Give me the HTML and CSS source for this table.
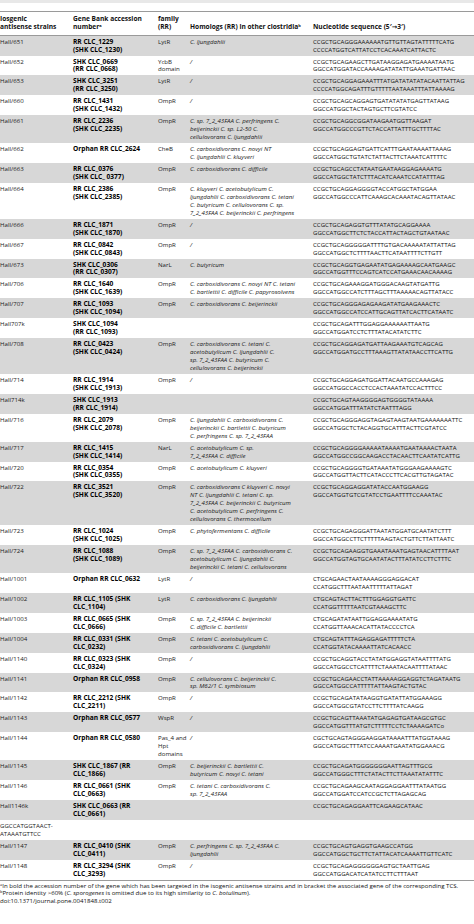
FILE: index.html
```html
<!DOCTYPE html>
<html>
<head>
<meta charset="utf-8">
<link rel="stylesheet" href="styles.css">
</head>
<body>
<div class="topband"></div>
<table class="tcs">
<colgroup><col class="w1"><col class="w2"><col class="w3"><col class="w4"><col class="w5"></colgroup>
<thead>
<tr><th>Iosgenic<br>antisense strains</th><th>Gene Bank accession<br>number<sup>a</sup></th><th>family<br>(RR)</th><th>Homologs (RR) in other clostridia<sup>b</sup></th><th>Nucleotide sequence (5′→3′)</th></tr>
</thead>
<tbody>
<tr><td class="c1">Hall/651</td><td class="c2">RR CLC_1229<br>(SHK CLC_1230)</td><td class="c3">LytR</td><td class="c4">C. ljungdahlii</td><td class="c5">CCGCTGCAGGGAAAAAATGTTGTTAGTATTTTTCATG<br>CCCCATGGTCATTATCCTCACAAATCATTACTC</td></tr>
<tr><td class="c1">Hall/652</td><td class="c2">SHK CLC_0669<br>(RR CLC_0668)</td><td class="c3">YcbB<br>domain</td><td class="c4">/</td><td class="c5">CCGCTGCAGAAGCTTGATAAGGAGATGAAAATAATG<br>GGCCATGGATACCAAAAGATATATTGAAATGATTAAC</td></tr>
<tr><td class="c1">Hall/653</td><td class="c2">SHK CLC_3251<br>(RR CLC_3250)</td><td class="c3">LytR</td><td class="c4">/</td><td class="c5">CCGCTGCAGGAGAAATTTATGATATATATACAATTATTAG<br>CCCCATGGCAGATTTGTTTTTAATAAATTTATTAAAAG</td></tr>
<tr><td class="c1">Hall/660</td><td class="c2">RR CLC_1431<br>(SHK CLC_1432)</td><td class="c3">OmpR</td><td class="c4">/</td><td class="c5">CCGCTGCAGCAGGAGTGATATATATGAGTTATAAG<br>GGCCATGGCTACTAGTGCTTCGTATCC</td></tr>
<tr><td class="c1">Hall/661</td><td class="c2">RR CLC_2236<br>(SHK CLC_2235)</td><td class="c3">OmpR</td><td class="c4">C. sp. 7_2_43FAA C. perfringens C.<br>beijerinckii C. sp. L2-50 C.<br>cellulovorans C. ljungdahlii</td><td class="c5">CCGCTGCAGGCGGATAAGAATGGTTAAGAT<br>GGCCATGGCCCGTTCTACCATTATTTGCTTTTAC</td></tr>
<tr><td class="c1">Hall/662</td><td class="c2">Orphan RR CLC_2624</td><td class="c3">CheB</td><td class="c4">C. carboxidivorans C. novyi NT<br>C. ljungdahlii C. kluyveri</td><td class="c5">CCGCTGCAGGAGTGATTCATTTGAATAAAATTAAAG<br>GGCCATGGCTGTATCTATTACTTCTAAATCATTTTC</td></tr>
<tr><td class="c1">Hall/663</td><td class="c2">RR CLC_0376<br>(SHK CLC_ 0377)</td><td class="c3">OmpR</td><td class="c4">C. carboxidivorans C. difficile</td><td class="c5">CCGCTGCAGCCTATAATGAATAAGGAGAAAATG<br>GGCCATGGCTATCTTTACATCAAATCCATATTTAG</td></tr>
<tr><td class="c1">Hall/664</td><td class="c2">RR CLC_2386<br>(SHK CLC_2385)</td><td class="c3">OmpR</td><td class="c4">C. kluyveri C. acetobutylicum C.<br>ljungdahlii C. carboxidivorans C. tetani<br>C. butyricum C. cellulovorans C. sp.<br>7_2_43FAA C. beijerinckii C. perfringens</td><td class="c5">CCGCTGCAGGAGGGGTACCATGGCTATGGAA<br>GGCCATGGCCCATTCAAAGCACAAATACAGTTATAAC</td></tr>
<tr><td class="c1">Hall/666</td><td class="c2">RR CLC_1871<br>(SHK CLC_1870)</td><td class="c3">OmpR</td><td class="c4">/</td><td class="c5">CCGCTGCAGAGGTGTTTATATGCAGGAAAA<br>GGCCATGGCTTCTCTACCATTACTAGCTGTAATAAC</td></tr>
<tr><td class="c1">Hall/667</td><td class="c2">RR CLC_0842<br>(SHK CLC_0843)</td><td class="c3">OmpR</td><td class="c4">/</td><td class="c5">CCGCTGCAGGGGGATTTTGTGACAAAAATATTATTAG<br>GGCCATGGCTCTTTTAACTTCATAATTTTCTTGTT</td></tr>
<tr><td class="c1">Hall/673</td><td class="c2">SHK CLC_0306<br>(RR CLC_0307)</td><td class="c3">NarL</td><td class="c4">C. butyricum</td><td class="c5">CCGCTGCAGGTGAGAATATGAGAAAAGCAATGAAGC<br>GGCCATGGTTTCCAGTCATCCATGAAACAACAAAAG</td></tr>
<tr><td class="c1">Hall/706</td><td class="c2">RR CLC_1640<br>(SHK CLC_1639)</td><td class="c3">OmpR</td><td class="c4">C. carboxidivorans C. novyi NT C. tetani<br>C. bartlettii C. difficile C. papyrosolvens</td><td class="c5">CCGCTGCAGAAAGGATGGGACAAGTATGATTG<br>GGCCATGGCCATCTTTAGCTTTAAAAACAGTTATACC</td></tr>
<tr><td class="c1">Hall/707</td><td class="c2">RR CLC_1093<br>(SHK CLC_1094)</td><td class="c3">OmpR</td><td class="c4">C. carboxidivorans C. beijerinckii</td><td class="c5">CCGCTGCAGGGAGAGAAGATATGAAGAAACTC<br>GGCCATGGCCATCCATTGCAGTTATCACTTCATAATC</td></tr>
<tr><td class="c1">Hall707k</td><td class="c2">SHK CLC_1094<br>(RR CLC_1093)</td><td class="c3"></td><td class="c4"></td><td class="c5">CCGCTGCAGATTTGGAGGAAAAAATTAATG<br>GGCCATGGATCCTCTTTATACATATCTTC</td></tr>
<tr><td class="c1">Hall/708</td><td class="c2">RR CLC_0423<br>(SHK CLC_0424)</td><td class="c3">OmpR</td><td class="c4">C. carboxidivorans C. tetani C.<br>acetobutylicum C. ljungdahlii C.<br>sp. 7_2_43FAA C. butyricum C.<br>cellulovorans C. beijerinckii</td><td class="c5">CCGCTGCAGGAGATGATTAAGAAATGTCAGCAG<br>GGCCATGGATGCCTTTAAAGTTATATAACCTTCATTG</td></tr>
<tr><td class="c1">Hall/714</td><td class="c2">RR CLC_1914<br>(SHK CLC_1913)</td><td class="c3">OmpR</td><td class="c4">/</td><td class="c5">CCGCTGCAGGAGATGGATTACAATGCCAAAGAG<br>GGCCATGGCCACCTCCACTAAATATCCACTTTCC</td></tr>
<tr><td class="c1">Hall714k</td><td class="c2">SHK CLC_1913<br>(RR CLC_1914)</td><td class="c3"></td><td class="c4"></td><td class="c5">CCGCTGCAGTAAGGGGAGTGGGGTATAAAA<br>GGCCATGGATTTATATCTAATTTAGG</td></tr>
<tr><td class="c1">Hall/716</td><td class="c2">RR CLC_2079<br>(SHK CLC_2078)</td><td class="c3">OmpR</td><td class="c4">C. ljungdahlii C. carboxidivorans C.<br>beijerinckii C. bartlettii C. butyricum<br>C. perfringens C. sp. 7_2_43FAA</td><td class="c5">CCGCTGCAGGGAGGTAGAGTAAGTAATGAAAAAAATTC<br>GGCCATGGCTCTACAGGTGCATTTACTTCGTATCC</td></tr>
<tr><td class="c1">Hall/717</td><td class="c2">RR CLC_1415<br>(SHK CLC_1414)</td><td class="c3">NarL</td><td class="c4">C. acetobutylicum C. sp.<br>7_2_43FAA C. difficile</td><td class="c5">CCGCTGCAGGGGAAAAATAAAATGAATAAAACTAATA<br>GGCCATGGCCGGCAAGACCTACAACTTCAATATCATTG</td></tr>
<tr><td class="c1">Hall/720</td><td class="c2">RR CLC_0354<br>(SHK CLC_0355)</td><td class="c3">OmpR</td><td class="c4">C. acetobutylicum C. kluyveri</td><td class="c5">CCGCTGCAGGGGTGATAAATATGGGAAGAAAAGTC<br>GGCCATGGTTACTTCATACCCTTCACGTTGTAGATAC</td></tr>
<tr><td class="c1">Hall/722</td><td class="c2">RR CLC_3521<br>(SHK CLC_3520)</td><td class="c3">OmpR</td><td class="c4">C. carboxidivorans C kluyveri C. novyi<br>NT C. ljungdahlii C. tetani C. sp.<br>7_2_43FAA C. beijerinckii C. butyricum<br>C. acetobutylicum C. perfringens C.<br>cellulovorans C. thermocellum</td><td class="c5">CCGCTGCAGGAGGATATACCAATGGAAGG<br>GGCCATGGTGTCGTATCCTGAATTTTCCAAATAC</td></tr>
<tr><td class="c1">Hall/723</td><td class="c2">RR CLC_1024<br>(SHK CLC_1025)</td><td class="c3">OmpR</td><td class="c4">C. phytofermentans C. difficile</td><td class="c5">CCGCTGCAGAGGGATTAATATGGATGCAATATCTTT<br>GGCCATGGCCTTCTTTTTAAGTACTGTTCTTATTAATC</td></tr>
<tr><td class="c1">Hall/724</td><td class="c2">RR CLC_1088<br>(SHK CLC_1089)</td><td class="c3">OmpR</td><td class="c4">C. sp. 7_2_43FAA C. carboxidivorans C.<br>acetobutylicum C. ljungdahlii C.<br>beijerinckii C. tetani C. cellulovorans</td><td class="c5">CCGCTGCAGAAGGTGAAATAAATGAGTAACATTTTAAT<br>GGCCATGGTAGTGCAATATACTTTATATCCTTCTTTC</td></tr>
<tr><td class="c1">Hall/1001</td><td class="c2">Orphan RR CLC_0632</td><td class="c3">LytR</td><td class="c4">/</td><td class="c5">CTGCAGAACTAATAAAAGGGAGGACAT<br>CCATGGCTTTAATAATTTTTATTAGAT</td></tr>
<tr><td class="c1">Hall/1002</td><td class="c2">RR CLC_1105 (SHK<br>CLC_1104)</td><td class="c3">LytR</td><td class="c4">C. carboxidivorans C. ljungdahlii</td><td class="c5">CTGCAGTACTTACTTTGGAGGTGATTC<br>CCATGGTTTTTAATCGTAAAGCTTC</td></tr>
<tr><td class="c1">Hall/1003</td><td class="c2">RR CLC_0665 (SHK<br>CLC_0666)</td><td class="c3">OmpR</td><td class="c4">C. sp. 7_2_43FAA C. beijerinckii<br>C. difficile C. bartlettii</td><td class="c5">CTGCAGATATAATTGGAGGAAAATATG<br>CCATGGTTAAACACATTATACCCCTCA</td></tr>
<tr><td class="c1">Hall/1004</td><td class="c2">RR CLC_0331 (SHK<br>CLC_0232)</td><td class="c3">OmpR</td><td class="c4">C. tetani C. acetobutylicum C.<br>carboxidivorans C. ljungdahlii</td><td class="c5">CTGCAGTATTTAGAGGAGATTTTTCTA<br>CCATGGTATACAAAATTATCACAACC</td></tr>
<tr><td class="c1">Hall/1140</td><td class="c2">RR CLC_0323 (SHK<br>CLC_0324)</td><td class="c3">OmpR</td><td class="c4">/</td><td class="c5">CCGCTGCAGGTACCTATATGGAGGTATAATTTTATG<br>GGCCATGGCCTCATTTTCTAAATACAATTTTATAAC</td></tr>
<tr><td class="c1">Hall/1141</td><td class="c2">Orphan RR CLC_0958</td><td class="c3">OmpR</td><td class="c4">C. cellulovorans C. beijerinckii C.<br>sp. M62/1 C. symbiosum</td><td class="c5">CCGCTGCAGAACCTATTAAAAAGGAGGTCTAGATAATG<br>GGCCATGGCCATTTTTATTAAGTACTGTAC</td></tr>
<tr><td class="c1">Hall/1142</td><td class="c2">RR CLC_2212 (SHK<br>CLC_2211)</td><td class="c3">OmpR</td><td class="c4">/</td><td class="c5">CCGCTGCAGATATAAGGTGATATTATGGAAAGG<br>GGCCATGGCGTATCCTTCTTTTATCAAGG</td></tr>
<tr><td class="c1">Hall/1143</td><td class="c2">Orphan RR CLC_0577</td><td class="c3">WspR</td><td class="c4">/</td><td class="c5">CCGCTGCAGTTAAATATGAGAGTGATAAGCGTGC<br>GGCCATGGTTTATGTCTTTTTCCTCTAAAAGATCo</td></tr>
<tr><td class="c1">Hall/1144</td><td class="c2">Orphan RR CLC_0580</td><td class="c3">Pas_4 and<br>Hpt<br>domains</td><td class="c4">/</td><td class="c5">CGCTGCAGTAGGGAAGGATAAAATTTATGGTAAAG<br>GGCCATGGCTTTATCCAAAATGAATATGGAAACG</td></tr>
<tr><td class="c1">Hall/1145</td><td class="c2">SHK CLC_1867 (RR<br>CLC_1866)</td><td class="c3">OmpR</td><td class="c4">C. beijerinckii C. bartlettii C.<br>butyricum C. novyi C. tetani</td><td class="c5">CCGCTGCAGATGGGGGGGAATTAGTTTGCG<br>GGCCATGGGCTTTCTATACTTCTTAAATATATTTC</td></tr>
<tr><td class="c1">Hall/1146</td><td class="c2">RR CLC_0661 (SHK<br>CLC_0663)</td><td class="c3">OmpR</td><td class="c4">C. tetani C. carboxidivorans C.<br>sp. 7_2_43FAA</td><td class="c5">CCGCTGCAGAAGCAATAGGAGGAATTTATAATGG<br>GGCCATGGATCCATCCGCTCTTAGAGCAG</td></tr>
<tr><td class="c1">Hall1146k</td><td class="c2">SHK CLC_0663 (RR<br>CLC_0661)</td><td class="c3"></td><td class="c4"></td><td class="c5">CCGCTGCAGAGGAATTCAGAAGCATAAC</td></tr>
<tr><td class="c1">GGCCATGGTAACT-<br>ATAAATGTTCC</td><td class="c2"></td><td class="c3"></td><td class="c4"></td><td class="c5"></td></tr>
<tr><td class="c1">Hall/1147</td><td class="c2">RR CLC_0410 (SHK<br>CLC_0411)</td><td class="c3">OmpR</td><td class="c4">C. perfringens C. sp. 7_2_43FAA C.<br>ljungdahlii</td><td class="c5">CCGCTGCAGTGAGGTGAAGCCATGG<br>GGCCATGGCTGCTTCTATTACATCAAAATTGTTCATC</td></tr>
<tr><td class="c1">Hall/1148</td><td class="c2">RR CLC_3294 (SHK<br>CLC_3293)</td><td class="c3">OmpR</td><td class="c4">/</td><td class="c5">CCGCTGCAGAGGGGGGAGTGCTAATTGAG<br>GGCCATGGACATCATATCCTTCTTTAAT</td></tr>
</tbody>
</table>
<div class="notes">
<p><sup>a</sup>In bold the accession number of the gene which has been targeted in the isogenic antisense strains and in bracket the associated gene of the corresponding TCS.</p>
<p><sup>b</sup>Protein identity &gt;60% (<i>C. sporogenes</i> is omitted due to its high similarity to <i>C. botulinum</i>).</p>
<p>doi:10.1371/journal.pone.0041848.t002</p>
</div>
</body>
</html>
```

FILE: styles.css
```css
html, body {
  margin: 0;
  padding: 0;
  background: #ffffff;
}
body {
  font-family: "Open Sans", "DejaVu Sans", sans-serif;
  color: #111;
  width: 474px;
}
.topband {
  height: 3px;
  background: #e8e8e8;
}
.tcs {
  margin-top: 8px;
  width: 474px;
  table-layout: fixed;
  border-collapse: collapse;
  border-top: 1.5px solid #9a9a9a;
  border-bottom: 1px solid #9a9a9a;
}
.w1 { width: 73px; }
.w2 { width: 85px; }
.w3 { width: 32px; }
.w4 { width: 123px; }
.w5 { width: 161px; }
.tcs th {
  font-size: 6.6px;
  font-weight: 700;
  text-align: left;
  vertical-align: bottom;
  line-height: 8.3px;
  padding: 3px 0 3px 0;
  white-space: nowrap;
  border-bottom: 1.5px solid #9a9a9a;
  color: #111;
}
.tcs sup {
  font-size: 4px;
  line-height: 0;
  vertical-align: 2.5px;
}
.tcs td {
  font-size: 6.1px;
  line-height: 7.95px;
  padding: 2px 0 2px 0;
  vertical-align: top;
  white-space: nowrap;
  overflow: visible;
}
.tcs tbody tr:nth-child(odd) {
  background: #d7d7d7;
}
.c1 { color: #1a1a1a; }
.c2 {
  font-weight: 700;
  font-size: 6.6px !important;
  color: #000;
}
.c3 { color: #1a1a1a; }
.c4 {
  font-style: italic;
  color: #1a1a1a;
}
.c5 { color: #111; }
.notes {
  padding-top: 1px;
  font-size: 6.1px;
  line-height: 7.8px;
  color: #111;
}
.notes p {
  margin: 0;
  white-space: nowrap;
}
.notes sup {
  font-size: 4px;
  line-height: 0;
  vertical-align: 2.5px;
}
```
